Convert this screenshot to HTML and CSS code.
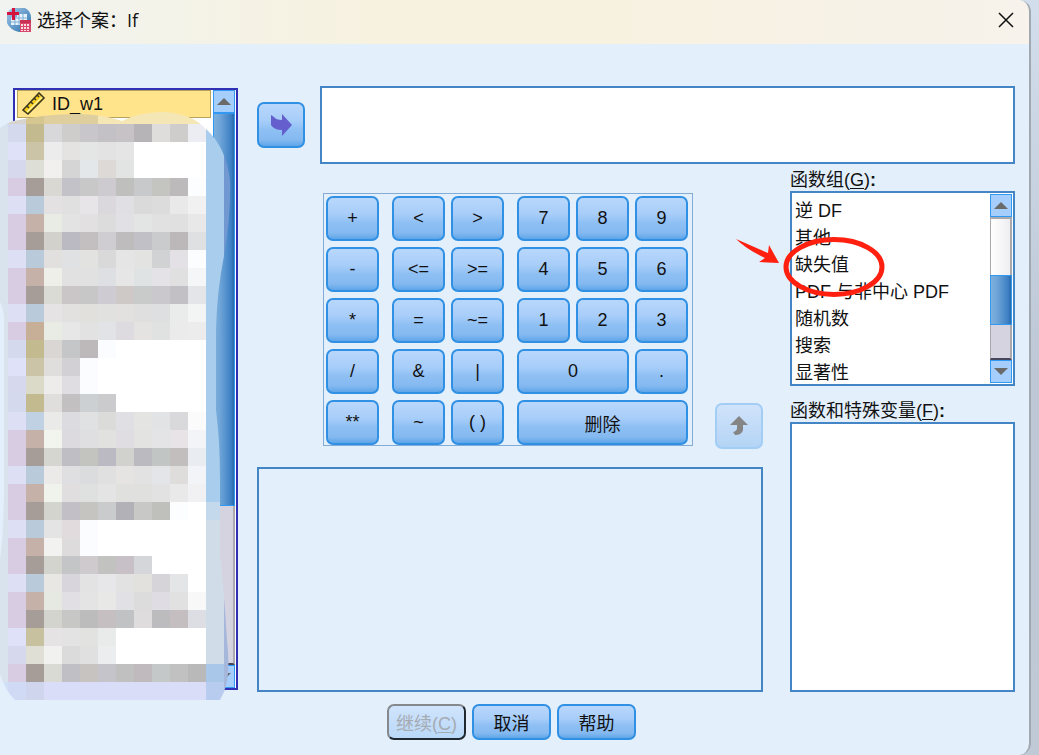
FILE: index.html
```html
<!DOCTYPE html>
<html lang="zh-CN">
<head>
<meta charset="utf-8">
<title>选择个案：If</title>
<link rel="stylesheet" href="styles.css">
</head>
<body>
<div class="dialog">
  <header class="titlebar">
    <svg class="app-icon" viewBox="0 0 24 24" aria-hidden="true">
      <defs><linearGradient id="globe" x1="0" y1="0" x2="1" y2="1"><stop offset="0" stop-color="#a4c8e6"/><stop offset="1" stop-color="#286fae"/></linearGradient></defs>
      <path d="M6 0h12q6 3 6 10v14H12Q3 22 0 15V7q1-5 6-7z" fill="url(#globe)"/>
      <path d="M10 6h10v4H10zM4 9h16v8H4z" fill="#e6f2fb"/>
      <path d="M4 10h16M4 14h16M8 8v9M12 6v11M16 6v11" stroke="#7facd4" stroke-width="1"/>
      <path d="M5 0h3v4h4v3H8v5H5V7H0V4h5z" fill="#d5133d"/>
      <path d="M13 12h11v12H13z" fill="#d8486a"/>
      <path d="M13 12h11v3H13z" fill="#cc2f54"/>
      <path d="M14 16h2v2h-2zm3 0h2v2h-2zm3 0h2v2h-2zm-6 3h2v2h-2zm3 0h2v2h-2zm3 0h2v2h-2zm-6 3h2v1h-2zm3 0h2v1h-2zm3 0h2v1h-2z" fill="#fbdde5"/>
    </svg>
    <h1 class="title">选择个案：If</h1>
    <button class="close" type="button" aria-label="关闭"><svg viewBox="0 0 16 16"><path d="M1 1l14 14M15 1L1 15" fill="none" stroke="#111" stroke-width="1.5"/></svg></button>
  </header>

  <main class="content">
    <section class="variables">
      <ul class="variable-list" role="listbox" aria-label="变量">
        <li class="variable" role="option" aria-selected="true">
          <svg class="ruler" viewBox="0 0 24 24" aria-hidden="true"><path d="M1 18L17 1l5 5L6 22z" fill="#f7cf1d" stroke="#3e3920" stroke-width="1.6"/><path d="M5 14l2 2M9 10l2 2M12 6l2 2M15 3l2 2" stroke="#3e3920" stroke-width="1.6"/><path d="M5 20L20 5" fill="none" stroke="#fff3a0" stroke-width="1.5"/></svg>
          <span>ID_w1</span>
        </li>
      </ul>
      <div class="scrollbar" aria-hidden="true">
        <span class="scroll-end"><svg viewBox="0 0 14 7"><path d="M0 7l7-7 7 7z"/></svg></span>
        <span class="thumb thumb-long"></span>
        <span class="track track-end"></span>
        <span class="scroll-end"><svg viewBox="0 0 14 7"><path d="M0 0l7 7 7-7z"/></svg></span>
      </div>
    </section>

    <div class="workspace">
      <div class="expression-row">
        <button class="btn move" type="button" aria-label="移入表达式"><svg viewBox="0 0 24 24"><path d="M2 2l3 2q2 3 8 3V1l10 11-10 11v-6Q5 17 2 12z" fill="#655fce"/></svg></button>
        <textarea class="box expression" aria-label="数值表达式"></textarea>
      </div>

      <div class="lower">
        <div class="middle">
          <div class="keypad-row">
            <div class="keypad">
              <div class="keys keys-one">
                <button class="btn" type="button">+</button><button class="btn" type="button">-</button><button class="btn" type="button">*</button><button class="btn" type="button">/</button><button class="btn" type="button">**</button>
              </div>
              <div class="keys keys-two">
                <button class="btn" type="button">&lt;</button><button class="btn" type="button">&gt;</button>
                <button class="btn" type="button">&lt;=</button><button class="btn" type="button">&gt;=</button>
                <button class="btn" type="button">=</button><button class="btn" type="button">~=</button>
                <button class="btn" type="button">&amp;</button><button class="btn" type="button">|</button>
                <button class="btn" type="button">~</button><button class="btn" type="button">( )</button>
              </div>
              <div class="keys keys-three">
                <button class="btn" type="button">7</button><button class="btn" type="button">8</button><button class="btn" type="button">9</button>
                <button class="btn" type="button">4</button><button class="btn" type="button">5</button><button class="btn" type="button">6</button>
                <button class="btn" type="button">1</button><button class="btn" type="button">2</button><button class="btn" type="button">3</button>
                <button class="btn span-two" type="button">0</button><button class="btn" type="button">.</button>
                <button class="btn span-three" type="button">删除</button>
              </div>
            </div>
            <button class="btn move faded" type="button" aria-label="移入函数" disabled><svg viewBox="0 0 24 24"><path d="M12 2l9 9h-5v5q-1 5-8 5l-2-3q4-1 4-4v-3H3z" fill="#858585"/></svg></button>
          </div>
          <div class="box description"></div>
        </div>

        <div class="functions">
          <div class="label" id="group-label">函数组(<u>G</u>)<b>:</b></div>
          <div class="box group-box">
            <ul class="group-list" role="listbox" aria-labelledby="group-label">
              <li role="option">逆 DF</li>
              <li role="option">其他</li>
              <li role="option">缺失值</li>
              <li role="option">PDF 与非中心 PDF</li>
              <li role="option">随机数</li>
              <li role="option">搜索</li>
              <li role="option">显著性</li>
            </ul>
            <div class="scrollbar" aria-hidden="true">
              <span class="scroll-end"><svg viewBox="0 0 14 7"><path d="M0 7l7-7 7 7z"/></svg></span>
              <span class="track track-light"></span>
              <span class="thumb thumb-short"></span>
              <span class="track track-end"></span>
              <span class="scroll-end"><svg viewBox="0 0 14 7"><path d="M0 0l7 7 7-7z"/></svg></span>
            </div>
            <svg class="marker" viewBox="0 0 152 64" aria-hidden="true"><path d="M0 2l32 14 1-8 10 18-20-1 6-4Q10 12 0 2z" fill="#ff2010"/><ellipse cx="98" cy="30" rx="48" ry="27.5" fill="none" stroke="#ff2010" stroke-width="5"/></svg>
          </div>
          <div class="label label-second" id="special-label">函数和特殊变量(<u>F</u>)<b>:</b></div>
          <ul class="box special-list" role="listbox" aria-labelledby="special-label"></ul>
        </div>
      </div>
    </div>
  </main>

  <footer class="actions">
    <button class="btn action continue" type="button" disabled>继续(<u>C</u>)</button>
    <button class="btn action" type="button">取消</button>
    <button class="btn action" type="button">帮助</button>
  </footer>

  <svg class="mosaic" viewBox="0 0 240 710" aria-hidden="true">
    <defs><clipPath id="blob"><path d="M0 128Q5 124 13 121Q50 113 80 114Q106 115 122 121Q136 113 160 112Q190 112 206 129Q226 147 230 180Q231 215 224 256Q217 290 216 330V410Q220 440 220 480V555Q224 590 227 640Q231 675 224 692L220 700H15Q6 692 0 674V560Q4 530 4 480V320Q4 310 0 302z"/></clipPath></defs>
    <g class="mosaic-cells" clip-path="url(#blob)"></g>
  </svg>
</div>
<script src="mosaic.js"></script>
</body>
</html>
```
FILE: styles.css
```css
* { box-sizing: border-box; }
body {
  margin: 0;
  background: linear-gradient(#d3deec, #bdc7d6 50%, #c0cad6);
  color: #111;
  font: 18px "Liberation Sans", "Noto Sans CJK SC", sans-serif;
}
ul { margin: 0; padding: 0; list-style: none; }
button, textarea { font: inherit; color: inherit; }
u { text-underline-offset: 2px; }

.dialog {
  position: relative;
  display: flex;
  flex-direction: column;
  min-height: 100vh;
  margin-right: 8px;
  overflow: hidden;
  background: #e3effb;
  border-right: 2px solid #a2a8af;
  border-radius: 0 12px 12px 0;
}
.titlebar {
  display: flex;
  align-items: center;
  gap: 6px;
  height: 44px;
  padding: 0 15px 4px 7px;
  background: linear-gradient(90deg, #f1f3f0, #f7f2e0 36%, #f7f2e0 60%, #f7f2eb);
}
.app-icon { width: 24px; height: 24px; }
.title {
  flex: 1;
  margin: 0;
  font: 18px/24px "Open Sans", "Noto Sans CJK SC", sans-serif;
}
.close { width: 16px; height: 16px; padding: 0; border: 0; background: none; }
.close svg { display: block; }

.content {
  flex: 1;
  display: flex;
  gap: 19px;
  padding: 42px 14px 0 13px;
}
.variables {
  display: flex;
  flex: 0 0 225px;
  margin: 2px 0;
  padding: 0 1px 0 2px;
  background: #fff;
  border: 2px solid #3030b4;
}
.variable-list { flex: 1; padding-right: 2px; }
.variable {
  display: flex;
  align-items: center;
  gap: 6px;
  height: 28px;
  padding-left: 4px;
  background: #ffe48c;
  border: 1px solid #b7a35e;
}
.ruler { width: 24px; height: 24px; }

.scrollbar { display: flex; flex-direction: column; flex: 0 0 22px; }
.scroll-end {
  display: grid;
  place-items: center;
  height: 23px;
  background: #a5cefc;
  border: 1px solid #3199f2;
}
.scroll-end svg { width: 14px; height: 7px; fill: #6a6a6a; }
.thumb { border: 1px solid #3199f2; background: linear-gradient(90deg, #7db0dc, #6fa5d8 30%, #3c80c4 85%, #286aa8); }
.thumb-long { flex: 5 1 0; }
.thumb-short { flex: 0 0 50px; }
.track { border: 1px solid #a9a9ae; border-width: 0 2px 0 1px; background: #d5d3df; }
.track-end { flex: 2 1 0; border-bottom: 2px solid #45455c; }
.track-light { flex: 0 0 58px; background: linear-gradient(90deg, #fff, #eeeef2); border-top-width: 2px; }

.workspace { flex: 1; display: flex; flex-direction: column; min-width: 0; }
.expression-row { display: flex; align-items: center; gap: 15px; }
.box { background: #fff; border: 2px solid #4485c6; }
.expression { display: block; flex: 1; height: 78px; margin: 0; resize: none; }

.btn {
  padding: 0;
  border: 2px solid #3090e4;
  border-radius: 7px;
  background: linear-gradient(#b9d7fc, #a7cdf9 40%, #8fc0f4 60%, #84b9f0 85%, #5fa5e8);
}
.move { display: grid; place-items: center; flex: none; width: 48px; height: 46px; }
.move svg { width: 24px; height: 24px; }
.faded { border-color: #a2cdf4; background: linear-gradient(#d0e3fb, #b4d4f5); }

.lower { flex: 1; display: flex; gap: 27px; }
.middle { flex: 1; display: flex; flex-direction: column; padding-top: 29px; }
.keypad-row { display: flex; align-items: flex-end; gap: 22px; margin: 0 0 18px 66px; }
.keypad {
  display: flex;
  gap: 13px;
  margin-bottom: 3px;
  padding: 2px 4px 0 2px;
  border: 1px solid #82acd6;
}
.keys { display: grid; grid-auto-rows: 45px; gap: 6px; }
.keys-one { grid-template-columns: 53px; }
.keys-two { grid-template-columns: repeat(2, 53px); }
.keys-three { grid-template-columns: repeat(3, 53px); }
.span-two { grid-column: span 2; }
.span-three { grid-column: span 3; }
.description { flex: 1; background: #e3effb; }

.functions { display: flex; flex-direction: column; flex: 0 0 225px; }
.label { height: 27px; line-height: 32px; white-space: nowrap; }
.label-second { height: 36px; line-height: 50px; }
.group-box { position: relative; display: flex; height: 195px; padding: 1px; }
.group-list { flex: 1; padding: 4px 0 0 2px; overflow: hidden; line-height: 27px; white-space: nowrap; }
.special-list { flex: 1; }
.marker { position: absolute; left: -56px; top: 44px; width: 152px; height: 64px; }

.actions { display: flex; justify-content: center; gap: 6px; padding: 12px 6px 15px 0; }
.action { width: 79px; height: 36px; }
.continue {
  color: #a5abb3;
  border-color: #85898e #202830 #202830 #85898e;
  background: linear-gradient(#d0e4fc, #b9d8f8);
}
.mosaic { position: absolute; left: 0; top: 0; width: 240px; height: 710px; shape-rendering: crispEdges; }
```
FILE: mosaic.js
```javascript
// Cell colours for the censored variable names, one string per 18px row.
const rows = [
  "d5d9ed c4ba90 d8d7d9 cfcdcb c8c6ca c3c1c5 c6c2c6 b6b4b7 dedddb cfcdcb ecedf3",
  "dee1f7 cbc4a7 ececec e4e3e1 e3e6e5 e3e3e3 e5e5e5",
  "d6d9ed dddfd6 f1f0ee d6d5d6 e3e7e9 dcd9d7 e1e4e3",
  "d8cce3 a69d98 d9d8d2 c3c2c8 c8c8c8 cdcbcf bfc0bd c8c9cb c4c4c1 bdbabb fbfdff",
  "dde0f5 b9cadb e3e1e2 e1e0e0 e8e5e8 dad8dc e0e0e4 dadada dcdcdc e9e9ea f1f1f1",
  "d8cce3 c5b1a7 e9ebe5 e3e3e3 e3e0e1 dcdcdc e1e1e5 e3e5e4 e0e1e0 e1e0e0 e8e8e8",
  "d8cce3 a69d98 d2d1cb bbb9c1 c3bebf cfccd2 bebcbd c1c0c7 c9cbcc bcb8ba dfe0e2",
  "dde0f5 b9cadb e1e0de dfe1e3 e2e2e1 d9d9d9 e5e5e5 e3e3e2 d1d2d4 e3e1e6 fbfdff",
  "d8cce3 c5b1a7 efefea e1e1e1 e1e1e1 dedfe2 e6e6e6 e0e3e4 e4e2e6 e0e0e0 f5f6f8",
  "d8cce3 a69d98 dadbd5 cac5c6 c7c7c8 cecbd2 cec9c7 c9cbca cac8cc c3c0c5 e3e5e9",
  "dde0f5 b9cadb e5e3e3 e2e1e0 e1e0dc e1e1df e3e0e0 dfdfe0 dedfe1 eaebeb f2f5f4",
  "d8cce3 c7ae97 e9ebe5 e8e7e7 e3e2e2 e2e3e6 dddbdf e5e2e2 e0e2e2 ebebeb ececec",
  "d5d9ed c4ba90 dad6d4 c5c6c8 bdb9ba fafcff",
  "dee1f7 cbc4a7 dfdedc d2d0d4 fafcff",
  "d6d9ed dbd9c8 edecea e0dde2 fafcff",
  "d5d9ed c4ba90 dfdedc c2c0c0 cdd0d2 cbcbcd",
  "dde0f5 bfd1e2 eaeae9 dcdce0 e0e1e3 dbdbda e0e0e4 e4e4e3 e1e3e4 d9d9dc fbfbfb",
  "d8cce3 c5b1a7 f2f4ee dcdade dfdfe2 e1e2e0 dfdde2 e3e3e2 e4e3e5 e7e3e7 f2f4f7",
  "d8cce3 a69d98 d6d6d0 c0bec5 c3c3bf bbbac2 d1d1cd bcbac1 c1c5c3 c2bebd e9edf1",
  "dde0f5 b9cadb ebeae8 dfdfe2 dbdcde e0e0e0 e5e4e2 e2e2e2 e3e5e8 dfdddb f2f4f8",
  "d8cce3 c5b1a7 f0f2ec e0dedf dfe0e0 e4e4e4 e0e0de e0e1df e1e2e1 e9e9e9 f1f1f3",
  "d8cce3 a69d98 d4d4ce c2c0c6 c6c4c1 c9cbcc b3b1b8 c8c9c7 bfbfbc fbfdff",
  "dde0f5 b9cadb e5e4e4 e1dbdd fafcff",
  "d8cce3 c5b1a7 f2f3f0 dddbdc fafcff",
  "d8cce3 a69d98 d4d4ce c4c5c7 cfcacd c2c3c1 c7c1c7 d5d6da",
  "dde0f5 b9cadb e8e7e3 d8d6dc e3e3e3 e7e7ea e2e2e2 e2e1dd d6d4d9 e4e5e7",
  "d8cce3 c5b1a7 e6e8e2 e1dfe3 e4e4e4 e8e8e7 e1e1e5 dcdcdc dfdce3 e1e1e1 f8f8f8",
  "d8cce3 a69d98 d4d4ce c7c7c6 bdbcbd c5bfc1 c1c2c4 dedcdd bcbcbe c5bec0 dddee4",
  "dee1f7 c8c19f e6e3e4 e3e3e3 e2e2e1 e8ebe9",
  "d6d9ed dfdfd6 f1f1ef dcdbdb e1e0e0 ebedef",
  "d8cce3 a69d98 dadad4 c0bfc6 c6c3c1 c4c4ca c1c0c0 c0babf c4c8c8 c2c1c1 b9b9b9",
  "d0daf5 cfd5ec d9ddf7 d9ddf7 d9ddf7 d9ddf7 d9ddf7 d9ddf7 d9ddf7 d9ddf7 d9ddf7"
];
const cell = 18;
const left = 8;
const top0 = 124;
const group = document.querySelector(".mosaic-cells");

function paint(x, y, width, height, color) {
  const rect = document.createElementNS("http://www.w3.org/2000/svg", "rect");
  const values = { x, y, width, height, fill: "#" + color };
  for (const name in values) rect.setAttribute(name, values[name]);
  group.appendChild(rect);
}

paint(0, 106, 26, cell, "d7d4cd");
paint(26, 106, cell, cell, "d6c68f");
paint(44, 106, 54, cell, "dfcf9f");
paint(98, 106, 142, cell, "f5e6b5");
rows.forEach((row, r) => {
  const y = top0 + r * cell;
  const colors = row.split(" ");
  paint(0, y, left, cell, r === 31 ? "d0dff5" : "d9e3ed");
  for (let c = 0; c < 11; c++) paint(left + c * cell, y, cell, cell, colors[c] || "ffffff");
  const edge = r < 21 ? "a9cdec" : r === 21 ? "c4daec" : r < 30 ? "d0dde9" : r === 30 ? "a9c7e8" : "b8ccef";
  paint(206, y, cell, cell, edge);
  paint(224, y, cell, cell, r < 21 ? "7198d0" : "a6b7dc");
});
```
